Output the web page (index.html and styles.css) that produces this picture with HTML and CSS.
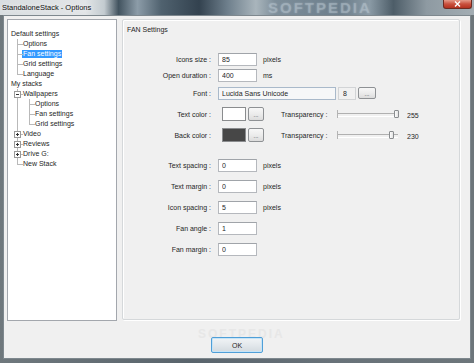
FILE: index.html
```html
<!DOCTYPE html>
<html lang="en">
<head>
    <meta charset="UTF-8">
    <meta name="viewport" content="width=device-width, initial-scale=1.0">
    <title>StandaloneStack - Options</title>
    <link rel="stylesheet" href="styles.css">
</head>
<body>
    <div class="window">
        <div class="titlebar">
            <span class="title">StandaloneStack - Options</span>
            <span class="glass-mark">SOFTPEDIA</span>
            <button class="close" type="button">
                <svg width="9" height="6" viewBox="0 0 9 6"><path d="M2 0.5l5 5M7 0.5l-5 5" stroke="#fff" stroke-width="1.4"/></svg>
            </button>
        </div>

        <div class="client">
            <div class="main">
                <ul class="tree">
                    <li class="root">Default settings
                        <ul>
                            <li>Options</li>
                            <li><span class="sel">Fan settings</span></li>
                            <li>Grid settings</li>
                            <li>Language</li>
                        </ul>
                    </li>
                    <li class="root">My stacks
                        <ul>
                            <li>
                                <svg class="exp" width="7" height="7" viewBox="0 0 7 7"><rect x="0.5" y="0.5" width="6" height="6" fill="#fff" stroke="#9a9a9a"/><path d="M2 3.5h3" stroke="#333"/></svg>
                                Wallpapers
                                <ul>
                                    <li>Options</li>
                                    <li>Fan settings</li>
                                    <li>Grid settings</li>
                                </ul>
                            </li>
                            <li>
                                <svg class="exp" width="7" height="7" viewBox="0 0 7 7"><rect x="0.5" y="0.5" width="6" height="6" fill="#fff" stroke="#9a9a9a"/><path d="M2 3.5h3M3.5 2v3" stroke="#333"/></svg>
                                Video
                            </li>
                            <li>
                                <svg class="exp" width="7" height="7" viewBox="0 0 7 7"><rect x="0.5" y="0.5" width="6" height="6" fill="#fff" stroke="#9a9a9a"/><path d="M2 3.5h3M3.5 2v3" stroke="#333"/></svg>
                                Reviews
                            </li>
                            <li>
                                <svg class="exp" width="7" height="7" viewBox="0 0 7 7"><rect x="0.5" y="0.5" width="6" height="6" fill="#fff" stroke="#9a9a9a"/><path d="M2 3.5h3M3.5 2v3" stroke="#333"/></svg>
                                Drive G:
                            </li>
                            <li>New Stack</li>
                        </ul>
                    </li>
                </ul>

                <div class="group">
                    <div class="group-title">FAN Settings</div>

                    <div class="row first">
                        <label class="lbl">Icons size :</label>
                        <input class="field" type="text" value="85">
                        <span class="unit">pixels</span>
                    </div>
                    <div class="row tight">
                        <label class="lbl">Open duration :</label>
                        <input class="field" type="text" value="400">
                        <span class="unit">ms</span>
                    </div>
                    <div class="row near">
                        <label class="lbl">Font :</label>
                        <input class="font-field" type="text" value="Lucida Sans Unicode" readonly>
                        <input class="size-field" type="text" value="8" readonly>
                        <button class="dots font-dots" type="button">...</button>
                    </div>
                    <div class="row">
                        <label class="lbl">Text color :</label>
                        <span class="swatch light"></span>
                        <button class="dots" type="button">...</button>
                        <span class="trans-lbl">Transparency :</span>
                        <div class="slider"><span class="thumb" style="left: 56px"></span></div>
                        <span class="value">255</span>
                    </div>
                    <div class="row">
                        <label class="lbl">Back color :</label>
                        <span class="swatch dark"></span>
                        <button class="dots" type="button">...</button>
                        <span class="trans-lbl">Transparency :</span>
                        <div class="slider"><span class="thumb" style="left: 51px"></span></div>
                        <span class="value">230</span>
                    </div>
                    <div class="row sep">
                        <label class="lbl">Text spacing :</label>
                        <input class="field" type="text" value="0">
                        <span class="unit">pixels</span>
                    </div>
                    <div class="row">
                        <label class="lbl">Text margin :</label>
                        <input class="field" type="text" value="0">
                        <span class="unit">pixels</span>
                    </div>
                    <div class="row">
                        <label class="lbl">Icon spacing :</label>
                        <input class="field" type="text" value="5">
                        <span class="unit">pixels</span>
                    </div>
                    <div class="row">
                        <label class="lbl">Fan angle :</label>
                        <input class="field" type="text" value="1">
                    </div>
                    <div class="row">
                        <label class="lbl">Fan margin :</label>
                        <input class="field" type="text" value="0">
                    </div>
                </div>
            </div>

            <div class="footer">
                <span class="footer-mark">SOFTPEDIA</span>
                <button class="ok" type="button">OK</button>
            </div>
        </div>
    </div>
</body>
</html>
```

FILE: styles.css
```css
* {
    box-sizing: border-box;
}

body {
    margin: 0;
    width: 474px;
    height: 363px;
    overflow: hidden;
    font-family: "Liberation Sans", Arial, sans-serif;
    font-size: 7px;
    color: #262626;
}

.window {
    height: 363px;
    display: flex;
    flex-direction: column;
    background: linear-gradient(90deg, #6f787d, #59646c 40%, #687279 70%, #6d767b);
}

.titlebar {
    position: relative;
    height: 15px;
    display: flex;
    align-items: center;
    padding-left: 2px;
    background: linear-gradient(90deg, #d9dee1 0, #e2e5e7 18%, #c3cbd0 22%, #42535f 25%, #8c9ca8 29%, #50626f 34%, #33424f 42%, #6e7f8c 48%, #a9b5bc 54%, #7d8e9a 58%, #6c7e8b 72%, #8a9aa5 78%, #4d5d68 83%, #8e9aa2 90%, #a3adb3 100%);
}

.title {
    color: #111;
    font-size: 7.5px;
    text-shadow: 0 0 4px rgba(255, 255, 255, 0.9);
}

.glass-mark {
    position: absolute;
    left: 268px;
    top: -1px;
    font-size: 15px;
    font-weight: bold;
    letter-spacing: 2px;
    color: rgba(200, 212, 222, 0.3);
    text-shadow: 0 0 2px rgba(200, 212, 222, 0.4);
}

.close {
    position: absolute;
    top: 0;
    right: 2px;
    width: 29px;
    height: 9px;
    padding: 0;
    display: flex;
    align-items: center;
    justify-content: center;
    border: 1px solid #6d2b22;
    border-top: none;
    border-radius: 0 0 3px 3px;
    background: linear-gradient(#e49a89, #c9503d 50%, #b3311f);
}

.client {
    height: 344px;
    margin: 0 3px;
    border: 1px solid #7e888e;
    background-color: #f0f0f0;
    display: flex;
    flex-direction: column;
}

.main {
    display: flex;
    padding: 3px 0 0 3px;
}

/* tree */

.tree,
.tree ul {
    list-style: none;
    margin: 0;
    padding: 0;
}

.tree {
    width: 110px;
    height: 302px;
    padding: 9px 0 0 3px;
    background-color: #fff;
    border: 1px solid #a3a7ad;
}

.tree li {
    line-height: 10px;
    white-space: nowrap;
}

.tree ul {
    margin-left: 6px;
}

.tree ul li {
    position: relative;
    padding-left: 6px;
}

.tree ul li::before {
    content: "";
    position: absolute;
    left: 0;
    top: 0;
    width: 5px;
    height: 5px;
    border-left: 1px solid #b9b9b9;
    border-bottom: 1px solid #b9b9b9;
}

.tree ul li::after {
    content: "";
    position: absolute;
    left: 0;
    top: 5px;
    bottom: 0;
    border-left: 1px solid #b9b9b9;
}

.tree ul li:last-child::after {
    display: none;
}

.exp {
    position: absolute;
    left: -3px;
    top: 1.5px;
    z-index: 1;
}

.sel {
    display: inline-block;
    margin-left: -1px;
    padding: 0 1px;
    line-height: 8px;
    background-color: #3399ff;
    color: #fff;
}

/* fan settings group */

.group {
    width: 338px;
    height: 301px;
    margin-left: 5px;
    padding: 5px 0 0 4px;
    border: 1px solid #d5d8da;
    border-radius: 2px;
    box-shadow: inset 1px 1px 0 #fff, 1px 1px 0 #fff;
}

.group-title {
    line-height: 10px;
}

.row {
    display: flex;
    align-items: center;
    height: 14px;
    margin-top: 7px;
}

.row.first {
    margin-top: 17px;
}

.row.tight {
    margin-top: 2px;
}

.row.near {
    margin-top: 4px;
}

.row.sep {
    margin-top: 16px;
}

.lbl {
    width: 84px;
    text-align: right;
}

input {
    font-family: inherit;
    font-size: 7px;
    color: #262626;
    height: 13px;
    margin: 0;
    outline: none;
}

.field {
    width: 39px;
    margin-left: 7px;
    padding: 0 0 0 3px;
    border: 1px solid #b5b8bd;
    border-top-color: #a0a4a9;
    background-color: #fff;
}

.unit {
    margin-left: 6px;
}

.font-field {
    width: 118px;
    margin-left: 7px;
    padding: 0 0 0 3px;
    border: 1px solid #a9b9ca;
    background-color: #f6f7f8;
}

.size-field {
    width: 18px;
    margin-left: 2px;
    padding: 0 0 0 4px;
    border: 1px solid #d2d4d6;
    background-color: #f1f1f1;
}

.dots {
    width: 16px;
    height: 14px;
    margin-left: 2px;
    padding: 2px 0 0 0;
    font-family: inherit;
    font-size: 6px;
    line-height: 8px;
    color: #333;
    border: 1px solid #8e9194;
    border-radius: 2px;
    background: linear-gradient(#f7f7f7, #ececec 50%, #dcdcdc);
}

.font-dots {
    width: 18px;
    height: 12px;
    padding-top: 1px;
}

.swatch {
    width: 24px;
    height: 14px;
    margin-left: 11px;
    border: 1px solid #8a8c8e;
}

.swatch.light {
    background-color: #fff;
}

.swatch.dark {
    background-color: #474747;
}

.trans-lbl {
    width: 56px;
    margin-left: 17px;
}

.slider {
    position: relative;
    width: 61px;
    height: 8px;
    border-left: 1px solid #b4b4b4;
}

.slider::before {
    content: "";
    position: absolute;
    left: 0;
    right: 0;
    top: 3px;
    height: 2px;
    border-top: 1px solid #b0b0b0;
    border-bottom: 1px solid #fff;
}

.thumb {
    position: absolute;
    top: 0;
    width: 5px;
    height: 8px;
    border: 1px solid #8a8d90;
    border-radius: 1px;
    background: linear-gradient(90deg, #fdfdfd, #e3e3e3);
}

.value {
    margin-left: 9px;
    padding-top: 2px;
}

/* bottom bar */

.footer {
    position: relative;
    display: flex;
    justify-content: center;
    padding-top: 16px;
}

.footer-mark {
    position: absolute;
    left: 194px;
    top: 6px;
    font-size: 12px;
    font-weight: bold;
    letter-spacing: 2px;
    color: #e7e7e7;
}

.ok {
    position: relative;
    width: 52px;
    height: 16px;
    padding: 0;
    font-family: inherit;
    font-size: 7px;
    color: #262626;
    border: 1px solid #4f9fd8;
    border-radius: 2px;
    background: linear-gradient(#f1f4f6, #e3e8ec 50%, #d3dadf);
    box-shadow: inset 0 0 0 1px #c6e4f7;
}
```
